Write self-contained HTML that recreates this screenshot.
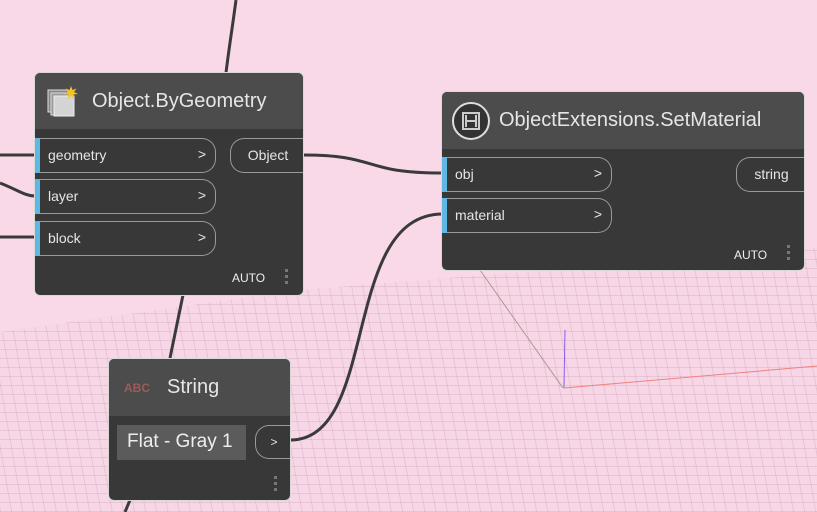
<!DOCTYPE html>
<html><head><style>
body{margin:0;width:817px;height:512px;overflow:hidden;background:#f9d9e8;position:relative;font-family:"Liberation Sans","DejaVu Sans",sans-serif}
.grid{position:absolute;left:0;top:0;width:817px;height:512px;clip-path:polygon(0 332px,300px 290px,817px 248px,817px 512px,0 512px);
background-color:#f7d6e5;
background-image:repeating-linear-gradient(0deg,rgba(180,130,160,.22) 0 1px,transparent 1px 9px),repeating-linear-gradient(80deg,rgba(180,130,160,.22) 0 1px,transparent 1px 11px);}
.node{position:absolute;background:#383838;border:1px solid #d8d8d8;border-radius:6px;overflow:hidden;box-sizing:border-box}
.hdr{background:#4c4c4c;color:#e6e6e6;font-size:20px;display:flex;align-items:center}
.port{position:absolute;border:1px solid #9a9a9a;border-left:none;border-radius:0 14px 14px 0;color:#e6e6e6;font-size:14px;box-sizing:border-box;background:#383838}
.port:before{content:"";position:absolute;left:0;top:-1px;bottom:-1px;width:5px;background:#5fb7e4}
.port .n{position:absolute;left:13px;top:8px}
.port .g{position:absolute;right:9px;top:7px}
.out{position:absolute;border:1px solid #9a9a9a;border-right:none;border-radius:14px 0 0 14px;color:#e6e6e6;font-size:14px;box-sizing:border-box;text-align:center;padding-top:8px}
.auto{position:absolute;color:#f0f0f0;font-size:12px}
.dots{position:absolute;width:3px}
.dots i{display:block;width:3px;height:3px;background:#777;margin-bottom:3px}
</style></head><body>
<div class="grid"></div>
<svg style="position:absolute;left:0;top:0" width="817" height="512">
<line x1="480" y1="270" x2="563" y2="388" stroke="#a99a90" stroke-width="1"/>
<line x1="565" y1="330" x2="564" y2="388" stroke="#8a5cf0" stroke-width="1"/>
<line x1="564" y1="388" x2="817" y2="366" stroke="#f08080" stroke-width="1"/>
<g fill="none" stroke="#3a3a3a" stroke-width="3">
<path d="M236 0 C232 30 228 55 226 73"/>
<path d="M0 155 L35 155"/>
<path d="M0 183 C18 190 25 196 35 196"/>
<path d="M0 237 L35 237"/>
<path d="M303 155 C380 155 360 173 443 173"/>
<path d="M183 295 L170 358"/>
<path d="M290 440 C380 440 340 214 443 214"/>
<path d="M130 500 L125 512"/>
</g></svg>

<div class="node" style="left:34px;top:72px;width:270px;height:224px">
 <div class="hdr" style="height:56px">
  <svg width="34" height="34" style="margin:0 12px 0 11px" viewBox="0 0 34 34"><rect x="2" y="6" width="20" height="22" fill="#888" stroke="#ddd"/><rect x="5" y="9" width="20" height="22" fill="#999" stroke="#ddd"/><rect x="8" y="12" width="20" height="20" fill="#d4d4d4" stroke="#eee"/><path d="M25 2l1.5 4 4-1.5-2.5 3.5 4 2-4.5.5.5 4.5-3-3-3 3 .5-4.5-4.5-.5 4-2-2.5-3.5 4 1.5z" fill="#f6c324"/></svg>
  Object.ByGeometry</div>
 <div class="port" style="left:0;top:65px;width:181px;height:35px"><span class="n">geometry</span><span class="g">&gt;</span></div>
 <div class="port" style="left:0;top:106px;width:181px;height:35px"><span class="n">layer</span><span class="g">&gt;</span></div>
 <div class="port" style="left:0;top:148px;width:181px;height:35px"><span class="n">block</span><span class="g">&gt;</span></div>
 <div class="out" style="left:195px;top:65px;width:75px;height:35px">Object</div>
 <div class="auto" style="left:197px;top:198px">AUTO</div>
 <div class="dots" style="left:250px;top:196px"><i></i><i></i><i></i></div>
</div>

<div class="node" style="left:441px;top:91px;width:364px;height:180px">
 <div class="hdr" style="height:57px">
  <svg width="40" height="40" style="margin:0 8px 0 9px" viewBox="0 0 40 40"><circle cx="20" cy="20" r="18" fill="#333" stroke="#ddd" stroke-width="2"/><path d="M12 12h16v16H12z M15 14v12 M25 14v12 M15 20h10" fill="none" stroke="#ccc" stroke-width="2"/></svg>
  ObjectExtensions.SetMaterial</div>
 <div class="port" style="left:0;top:65px;width:170px;height:35px"><span class="n">obj</span><span class="g">&gt;</span></div>
 <div class="port" style="left:0;top:106px;width:170px;height:35px"><span class="n">material</span><span class="g">&gt;</span></div>
 <div class="out" style="left:294px;top:65px;width:70px;height:35px">string</div>
 <div class="auto" style="left:292px;top:156px">AUTO</div>
 <div class="dots" style="left:345px;top:153px"><i></i><i></i><i></i></div>
</div>

<div class="node" style="left:108px;top:358px;width:183px;height:143px">
 <div class="hdr" style="height:57px"><span style="color:#a05a5a;font-weight:bold;font-size:12px;margin:0 17px 0 15px">ABC</span>String</div>
 <div style="position:absolute;left:8px;top:66px;width:129px;height:35px;background:#5b5b5b;color:#eee;font-size:19px;padding:6px 0 0 10px;box-sizing:border-box">Flat - Gray 1</div>
 <div class="out" style="left:146px;top:66px;width:37px;height:34px;font-size:12px;padding-top:9px">&gt;</div>
 <div class="dots" style="left:165px;top:117px"><i></i><i></i><i></i></div>
</div>
</body></html>
